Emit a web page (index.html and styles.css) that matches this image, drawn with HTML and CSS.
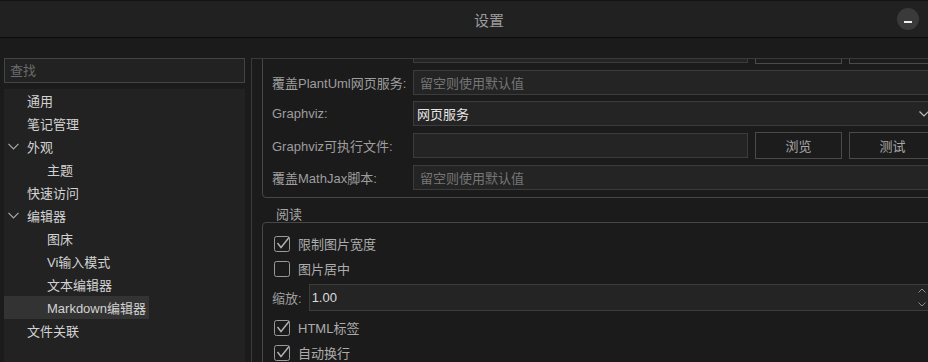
FILE: index.html
```html
<!DOCTYPE html>
<html lang="zh-CN">
<head>
<meta charset="utf-8">
<title>设置</title>
<link rel="stylesheet" href="styles.css">
</head>
<body>
<div class="app">
  <header class="titlebar">
    <span class="title">设置</span>
    <span class="close"><span class="dash"></span></span>
  </header>
  <div class="main">
    <aside class="sidebar">
      <div class="search">查找</div>
      <ul class="tree">
        <li class="item">通用</li>
        <li class="item">笔记管理</li>
        <li class="item exp"><svg class="arrow" viewBox="0 0 11 7"><polyline points="0.5,0.8 5.5,5.8 10.5,0.8"/></svg>外观</li>
        <li class="item l1">主题</li>
        <li class="item">快速访问</li>
        <li class="item exp"><svg class="arrow" viewBox="0 0 11 7"><polyline points="0.5,0.8 5.5,5.8 10.5,0.8"/></svg>编辑器</li>
        <li class="item l1">图床</li>
        <li class="item l1">Vi输入模式</li>
        <li class="item l1">文本编辑器</li>
        <li class="item l1 sel">Markdown编辑器</li>
        <li class="item">文件关联</li>
      </ul>
    </aside>
    <section class="scroll">
      <div class="content">
        <div class="group">
          <div class="group-title">通用</div>
          <div class="group-box form">
            <span class="label">PlantUml:</span>
            <div class="field combo"><span class="value">网页服务</span><svg class="chev" viewBox="0 0 10 6"><polyline points="0.5,0.5 5,5 9.5,0.5"/></svg></div>
            <span class="label">PlantUml JAR文件:</span>
            <div class="filerow"><div class="field file"></div><span class="btn">浏览</span><span class="btn">测试</span></div>
            <span class="label">覆盖PlantUml网页服务:</span>
            <div class="field"><span class="ph">留空则使用默认值</span></div>
            <span class="label">Graphviz:</span>
            <div class="field combo"><span class="value">网页服务</span><svg class="chev" viewBox="0 0 10 6"><polyline points="0.5,0.5 5,5 9.5,0.5"/></svg></div>
            <span class="label">Graphviz可执行文件:</span>
            <div class="filerow"><div class="field file"></div><span class="btn">浏览</span><span class="btn">测试</span></div>
            <span class="label">覆盖MathJax脚本:</span>
            <div class="field"><span class="ph">留空则使用默认值</span></div>
          </div>
        </div>
        <div class="group">
          <div class="group-title">阅读</div>
          <div class="group-box list">
            <div class="check"><svg class="box" viewBox="0 0 16 16"><rect x="0.5" y="0.5" width="15" height="15" rx="2"/><polyline class="tick" points="3.5,7 7,11.5 15,1.5"/></svg>限制图片宽度</div>
            <div class="check"><svg class="box" viewBox="0 0 16 16"><rect x="0.5" y="0.5" width="15" height="15" rx="2"/></svg>图片居中</div>
            <div class="spinrow">
              <span class="label">缩放:</span>
              <div class="spin"><span class="num">1.00</span>
                <span class="arrows">
                  <svg viewBox="0 0 8 5"><polyline points="0.5,4.5 4,1 7.5,4.5"/></svg>
                  <svg viewBox="0 0 8 5"><polyline points="0.5,0.5 4,4 7.5,0.5"/></svg>
                </span>
              </div>
            </div>
            <div class="check"><svg class="box" viewBox="0 0 16 16"><rect x="0.5" y="0.5" width="15" height="15" rx="2"/><polyline class="tick" points="3.5,7 7,11.5 15,1.5"/></svg>HTML标签</div>
            <div class="check"><svg class="box" viewBox="0 0 16 16"><rect x="0.5" y="0.5" width="15" height="15" rx="2"/><polyline class="tick" points="3.5,7 7,11.5 15,1.5"/></svg>自动换行</div>
            <div class="check"><svg class="box" viewBox="0 0 16 16"><rect x="0.5" y="0.5" width="15" height="15" rx="2"/></svg>代码块行号</div>
          </div>
        </div>
      </div>
    </section>
  </div>
</div>
</body>
</html>
```
FILE: styles.css
```css
html, body {
  margin: 0;
  padding: 0;
  background: #1b1b1b;
  overflow: hidden;
}
body {
  font-family: "Liberation Sans", "Noto Sans CJK SC", sans-serif;
  font-size: 13px;
}
.app {
  width: 928px;
  height: 362px;
  overflow: hidden;
  display: flex;
  flex-direction: column;
}
.titlebar {
  height: 36px;
  flex-shrink: 0;
  background: #212121;
  border-top: 1px solid #141414;
  border-bottom: 1px solid #0c0c0c;
  display: flex;
  align-items: center;
}
.title {
  flex: 1;
  text-align: center;
  padding-left: 81px;
  color: #9a9a9a;
  font-size: 15px;
}
.close {
  width: 22px;
  height: 22px;
  border-radius: 50%;
  background: #3a3a3a;
  margin-right: 9px;
  display: flex;
  align-items: center;
  justify-content: center;
}
.dash {
  width: 8px;
  height: 2px;
  background: #eeeeee;
  margin-top: 5px;
}
.main {
  display: flex;
  padding-top: 20px;
  flex: 1;
  min-height: 0;
}
.sidebar {
  width: 241px;
  margin-left: 4px;
  flex-shrink: 0;
  display: flex;
  flex-direction: column;
}
.search {
  height: 25px;
  box-sizing: border-box;
  border: 1px solid #444444;
  background: #222222;
  color: #6b6b6b;
  padding-left: 5px;
  line-height: 23px;
  flex-shrink: 0;
}
.tree {
  margin: 6px 0 0;
  padding: 0;
  list-style: none;
  background: #222222;
  flex: 1;
}
.item {
  height: 23px;
  width: 145px;
  box-sizing: border-box;
  display: flex;
  align-items: center;
  color: #d2d2d2;
  padding-left: 23px;
  white-space: nowrap;
}
.item.l1 {
  padding-left: 43px;
}
.item.exp {
  padding-left: 4px;
}
.item.sel {
  background: #333333;
}
.arrow {
  width: 11px;
  height: 7px;
  margin-right: 8px;
  fill: none;
  stroke: #a8a8a8;
  stroke-width: 1.2;
}
.scroll {
  margin-left: 6px;
  width: 720px;
  flex-shrink: 0;
  border-top: 1px solid #3a3a3a;
  border-left: 1px solid #3a3a3a;
  overflow: hidden;
}
.content {
  margin-top: -85px;
  padding-left: 10px;
}
.group {
  width: 684px;
}
.group-title {
  height: 24px;
  box-sizing: border-box;
  padding-top: 9px;
  padding-left: 14px;
  line-height: 15px;
  color: #a8a8a8;
}
.group-box {
  border: 1px solid #474747;
  border-radius: 4px;
  padding: 7px 9px;
}
.form {
  display: grid;
  grid-template-columns: 141px 1fr;
  row-gap: 6px;
  align-items: center;
}
.label {
  color: #9e9e9e;
  white-space: nowrap;
}
.field {
  height: 25px;
  box-sizing: border-box;
  background: #242424;
  border: 1px solid #3c3c3c;
  padding-left: 6px;
  display: flex;
  align-items: center;
}
.ph {
  color: #767676;
}
.combo {
  justify-content: space-between;
  padding-left: 3px;
  padding-right: 6px;
}
.value {
  color: #e6e6e6;
}
.chev {
  width: 10px;
  height: 6px;
  fill: none;
  stroke: #bdbdbd;
  stroke-width: 1.2;
}
.filerow {
  display: flex;
  gap: 7px;
  align-items: center;
}
.field.file {
  width: 335px;
}
.btn {
  width: 87px;
  height: 27px;
  box-sizing: border-box;
  border: 1px solid #4a4a4a;
  background: #1c1c1c;
  color: #a8a8a8;
  display: flex;
  align-items: center;
  justify-content: center;
  flex-shrink: 0;
}
.list {
  padding-top: 8px;
  display: flex;
  flex-direction: column;
}
.check {
  height: 25px;
  display: flex;
  align-items: center;
  color: #acacac;
  padding-left: 2px;
  white-space: nowrap;
}
.box {
  width: 16px;
  height: 16px;
  margin-right: 8px;
  fill: none;
  stroke: #9a9a9a;
  stroke-width: 1;
}
.box .tick {
  stroke: #b4b4b4;
  stroke-width: 1.4;
}
.spinrow {
  display: flex;
  align-items: center;
  height: 27px;
  margin: 3px 0 4px;
  gap: 7px;
}
.spin {
  flex: 1;
  height: 27px;
  box-sizing: border-box;
  background: #242424;
  border: 1px solid #3c3c3c;
  padding-left: 2px;
  padding-right: 9px;
  display: flex;
  align-items: center;
  justify-content: space-between;
}
.num {
  color: #dcdcdc;
}
.arrows {
  display: flex;
  flex-direction: column;
  gap: 9px;
}
.arrows svg {
  width: 8px;
  height: 5px;
  fill: none;
  stroke: #8c8c8c;
  stroke-width: 1;
}
```
